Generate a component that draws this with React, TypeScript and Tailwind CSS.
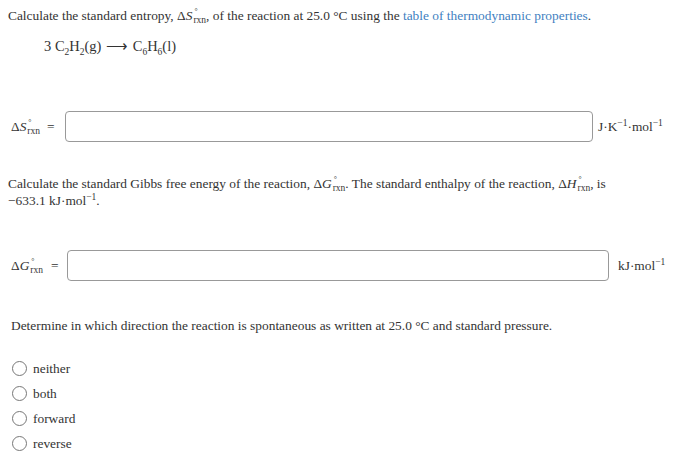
import React from "react";

function Rxn() {
  return (
    <span className="relative inline-block text-[9.5px] leading-none top-[3px] ml-[1px] not-italic">
      rxn
      <span className="absolute left-[1px] top-[-8px] text-[8px] leading-none">°</span>
    </span>
  );
}

function Sym({ letter }: { letter: string }) {
  return (
    <span className="whitespace-nowrap">
      Δ<span className="italic">{letter}</span>
      <Rxn />
    </span>
  );
}

function Sup({ children }: { children: React.ReactNode }) {
  return <span className="relative inline-block text-[9.5px] leading-none top-[-5px]">{children}</span>;
}

function Sub({ children }: { children: React.ReactNode }) {
  return <span className="relative inline-block text-[9.5px] leading-none top-[4px]">{children}</span>;
}

export default function App() {
  const options = ["neither", "both", "forward", "reverse"];

  return (
    <div
      className="w-[680px] h-[463px] overflow-hidden bg-white text-[#333] text-[13.4px] leading-[18px] flex flex-col"
      style={{ fontFamily: '"Liberation Serif", "Times New Roman", serif' }}
    >
      <div className="mt-[7px] pl-[8px] h-[18px] whitespace-nowrap">
        Calculate the standard entropy, <Sym letter="S" />, of the reaction at 25.0 °C using the{" "}
        <span className="text-[#3f7fbf]">table of thermodynamic properties</span>.
      </div>

      <div className="mt-[12px] pl-[44px] h-[18px] text-[14.5px] whitespace-nowrap">
        3 C<Sub>2</Sub>H<Sub>2</Sub>(g) <span className="mx-[1px]">⟶</span> C<Sub>6</Sub>H<Sub>6</Sub>(l)
      </div>

      {/* entropy answer */}
      <div className="mt-[56px] flex items-center pl-[11px] h-[31px]">
        <div className="w-[54px] flex items-center whitespace-nowrap">
          <Sym letter="S" />
          <span className="ml-[7px]">=</span>
        </div>
        <div className="w-[528px] h-[31px] border border-[#999] rounded-[4px]" />
        <div className="ml-[5px] whitespace-nowrap">
          J·K<Sup>−1</Sup>·mol<Sup>−1</Sup>
        </div>
      </div>

      <div className="mt-[33px] pl-[8px] pr-[8px] leading-[17px]">
        <div className="whitespace-nowrap">
          Calculate the standard Gibbs free energy of the reaction, <Sym letter="G" />. The standard enthalpy
          of the reaction, <Sym letter="H" />, is
        </div>
        <div>
          −633.1 kJ·mol<Sup>−1</Sup>.
        </div>
      </div>

      {/* gibbs answer */}
      <div className="mt-[41px] flex items-center pl-[11px] h-[31px]">
        <div className="w-[56px] flex items-center whitespace-nowrap">
          <Sym letter="G" />
          <span className="ml-[8px]">=</span>
        </div>
        <div className="w-[542px] h-[31px] border border-[#999] rounded-[4px]" />
        <div className="ml-[9px] whitespace-nowrap">
          kJ·mol<Sup>−1</Sup>
        </div>
      </div>

      <div className="mt-[36px] pl-[11px] h-[18px] whitespace-nowrap">
        Determine in which direction the reaction is spontaneous as written at 25.0 °C and standard pressure.
      </div>

      <div className="mt-[21px] pl-[12px] flex flex-col">
        {options.map((o) => (
          <label key={o} className="flex items-center gap-[6px] h-[25px]">
            <span className="w-[15px] h-[15px] rounded-full border border-[#777] bg-white" />
            <span>{o}</span>
          </label>
        ))}
      </div>
    </div>
  );
}
